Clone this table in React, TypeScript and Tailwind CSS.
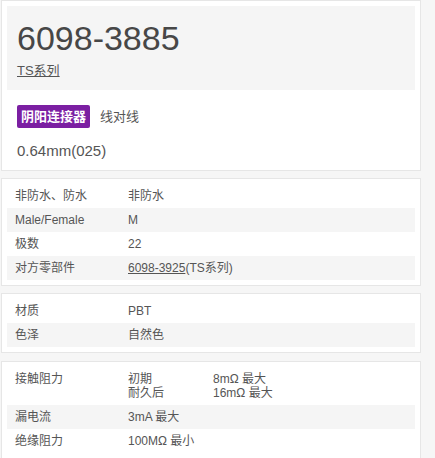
const rows1 = [
  { label: '非防水、防水', value: '非防水' },
  { label: 'Male/Female', value: 'M' },
  { label: '极数', value: '22' },
];

function Row({ label, children, shaded }: { label: string; children: React.ReactNode; shaded?: boolean }) {
  return (
    <div className={`flex py-[5px] pl-2 leading-[14px] ${shaded ? 'bg-[#f5f5f5]' : ''}`}>
      <div className="w-[113px] shrink-0">{label}</div>
      <div>{children}</div>
    </div>
  );
}

export default function App() {
  return (
    <div
      className="min-h-[458px] bg-[#f6f6f6] text-[12px] text-[#555]"
      style={{ fontFamily: '"Liberation Sans", Arial, "Noto Sans CJK SC", sans-serif' }}
    >
      <div className="w-[421px] pl-px">
        {/* header card */}
        <div className="mb-[7px] border border-[#e6e6e6] bg-white p-[5px] pb-[9px]">
          <div className="bg-[#f5f5f5] px-[10px] pt-3 pb-[10px]">
            <h1 className="text-[34px] leading-[40px] text-[#474747]">6098-3885</h1>
            <a className="mt-1 block text-[13px] leading-[18px] text-[#555] underline">TS系列</a>
          </div>
          <div className="mt-[15px] flex items-center gap-[10px] pl-[10px]">
            <span className="rounded-[2px] bg-[#7b1fa2] px-1 py-[3px] text-[13px] font-bold leading-[17px] text-white">
              阴阳连接器
            </span>
            <span className="text-[13px] text-[#555]">线对线</span>
          </div>
          <div className="mt-[13px] pl-[10px] text-[15px] leading-5 text-[#555]">0.64mm(025)</div>
        </div>

        {/* basic info */}
        <div className="mb-[7px] border border-[#e6e6e6] bg-white p-[5px]">
          {rows1.map((r, i) => (
            <Row key={r.label} label={r.label} shaded={i % 2 === 1}>
              {r.value}
            </Row>
          ))}
          <Row label="对方零部件" shaded>
            <a className="underline">6098-3925</a>(TS系列)
          </Row>
        </div>

        {/* material */}
        <div className="mb-[8px] border border-[#e6e6e6] bg-white p-[5px]">
          <Row label="材质">PBT</Row>
          <Row label="色泽" shaded>
            自然色
          </Row>
        </div>

        {/* electrical */}
        <div className="border border-[#e6e6e6] bg-white p-[5px]">
          <Row label="接触阻力">
            <div className="grid grid-cols-[85px_auto]">
              <span>初期</span>
              <span>8mΩ 最大</span>
              <span>耐久后</span>
              <span>16mΩ 最大</span>
            </div>
          </Row>
          <Row label="漏电流" shaded>
            3mA 最大
          </Row>
          <Row label="绝缘阻力">100MΩ 最小</Row>
        </div>
      </div>
    </div>
  );
}
